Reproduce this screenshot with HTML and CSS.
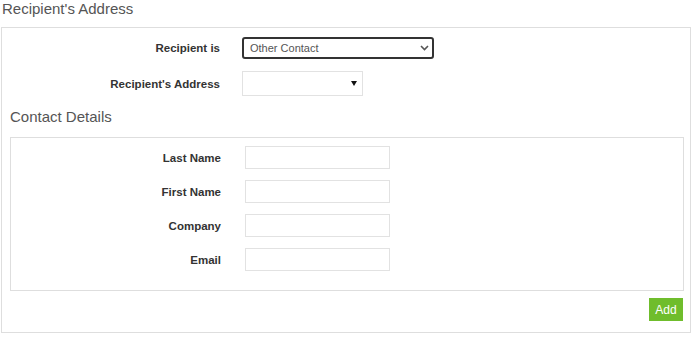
FILE: index.html
```html
<!DOCTYPE html>
<html>
<head>
<meta charset="utf-8">
<link rel="stylesheet" href="styles.css">
</head>
<body>
<h2 class="title">Recipient's Address</h2>
<div class="panel">
  <div class="row row-first">
    <label class="label">Recipient is</label>
    <div class="select-wrap select-focus">
      <select class="select"><option>Other Contact</option></select>
      <svg class="chev" width="9" height="6" viewBox="0 0 9 6"><path d="M1 1 L4.5 4.5 L8 1" fill="none" stroke="#555" stroke-width="1.6"/></svg>
    </div>
  </div>
  <div class="row row-second">
    <label class="label">Recipient's Address</label>
    <div class="select-wrap select-plain">
      <select class="select"><option></option></select>
      <svg class="tri" width="6" height="5" viewBox="0 0 6 5"><path d="M0 0 H6 L3 5 Z" fill="#111"/></svg>
    </div>
  </div>
  <h3 class="subtitle">Contact Details</h3>
  <div class="inner">
    <div class="crow"><label class="clabel">Last Name</label><input class="input" type="text"></div>
    <div class="crow"><label class="clabel">First Name</label><input class="input" type="text"></div>
    <div class="crow"><label class="clabel">Company</label><input class="input" type="text"></div>
    <div class="crow"><label class="clabel">Email</label><input class="input" type="text"></div>
  </div>
  <div class="actions"><button class="btn">Add</button></div>
</div>
</body>
</html>
```
FILE: styles.css
```css
html, body { margin: 0; padding: 0; background: #fff; }
body { font-family: "Liberation Sans", Arial, sans-serif; color: #333; }

.title {
  margin: 0 0 9px 0;
  padding-left: 2px;
  font-size: 15px;
  line-height: 18px;
  font-weight: normal;
  color: #555;
}

.panel {
  box-sizing: border-box;
  width: 690px;
  margin-left: 1px;
  border: 1px solid #dedede;
  padding: 9px 6px 11px 8px;
}

.row {
  display: flex;
  align-items: center;
  gap: 22px;
}
.row-second { margin-top: 12px; }

.label {
  width: 210px;
  text-align: right;
  font-size: 11.5px;
  font-weight: bold;
  color: #333;
}

.select-wrap { position: relative; box-sizing: border-box; }
.select {
  appearance: none;
  -webkit-appearance: none;
  box-sizing: border-box;
  width: 100%;
  height: 100%;
  background: #fff;
  font-family: "Liberation Sans", Arial, sans-serif;
  font-size: 11px;
  color: #555;
  outline: none;
  margin: 0;
}
.select-focus { width: 192px; height: 22px; }
.select-focus .select {
  border: 2px solid #333;
  border-radius: 3px;
  padding: 0 0 0 6px;
}
.select-plain { width: 121px; height: 25px; }
.select-plain .select {
  border: 1px solid #e2e2e2;
  border-radius: 0;
  padding: 0 0 0 6px;
}
.chev { position: absolute; right: 5px; top: 8px; }
.tri { position: absolute; right: 6px; top: 10px; }

.subtitle {
  margin: 12px 0 11px 0;
  font-size: 15px;
  line-height: 18px;
  font-weight: normal;
  color: #555;
}

.inner {
  border: 1px solid #dedede;
  padding: 8px 0 19px 0;
  display: flex;
  flex-direction: column;
  gap: 11px;
}
.crow { display: flex; align-items: center; gap: 24px; }
.clabel {
  width: 210px;
  text-align: right;
  font-size: 11.5px;
  font-weight: bold;
  color: #333;
}
.input {
  box-sizing: border-box;
  width: 145px;
  height: 23px;
  border: 1px solid #e2e2e2;
  margin: 0;
  padding: 0 4px;
  outline: none;
}

.actions {
  display: flex;
  justify-content: flex-end;
  margin-top: 7px;
  padding-right: 1px;
}
.btn {
  box-sizing: border-box;
  width: 34px;
  height: 23px;
  background: #6fbd2c;
  color: #fff;
  border: none;
  font-family: "Liberation Sans", Arial, sans-serif;
  font-size: 12px;
  padding: 0;
  margin: 0;
}
```
